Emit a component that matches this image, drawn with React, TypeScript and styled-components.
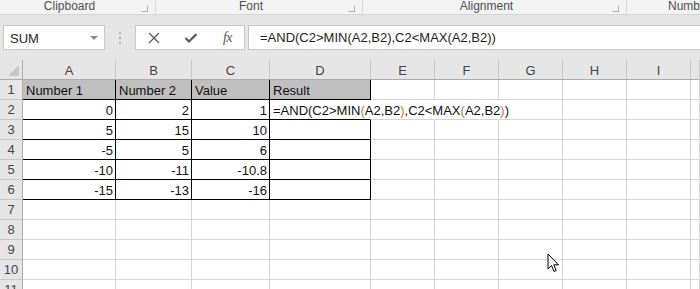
import React from "react";
import styled, { createGlobalStyle } from "styled-components";

const Global = createGlobalStyle`
  html, body { margin: 0; padding: 0; background: #ffffff; overflow: hidden; }
  body { font-family: "Liberation Sans", Arial, sans-serif; }
`;

const Page = styled.div`
  position: relative;
  width: 700px;
  height: 289px;
  overflow: hidden;
  background: #ffffff;
`;

const RibbonStrip = styled.div`
  display: flex;
  height: 14px;
  background: #f3f3f3;
  border-bottom: 1px solid #d5d5d5;
`;

const Group = styled.div<{ $w?: number }>`
  display: flex;
  align-items: center;
  ${(p) => (p.$w ? `width: ${p.$w}px;` : "flex: 1; min-width: 0;")}
  border-right: 1px solid #d8d8d8;
  box-sizing: border-box;
  height: 14px;
  overflow: hidden;
  &:last-child { border-right: none; }
`;

const GroupLabel = styled.div<{ $pad?: number; $start?: boolean }>`
  flex: 1;
  text-align: ${(p) => (p.$start ? "left" : "center")};
  font-size: 12px;
  color: #505050;
  line-height: 12px;
  margin-top: -2px;
  padding-left: ${(p) => p.$pad ?? 0}px;
  white-space: nowrap;
`;

const Launcher = styled.div`
  width: 7px;
  height: 7px;
  margin: 0 7px 0 4px;
  border: 1px solid #b0b0b0;
  box-sizing: border-box;
  border-top-color: transparent;
  border-left-color: transparent;
  position: relative;
  top: 1px;
`;

const FormulaArea = styled.div`
  background: #e6e6e6;
  padding: 10px 0 10px 3px;
  display: flex;
  align-items: center;
  height: 25px;
`;

const NameBox = styled.div`
  width: 102px;
  height: 25px;
  box-sizing: border-box;
  background: #ffffff;
  border: 1px solid #c6c6c6;
  display: flex;
  align-items: center;
  padding: 0 6px;
  font-size: 13px;
  color: #262626;
`;

const NameText = styled.span`
  flex: 1;
  padding-top: 1px;
`;

const Caret = styled.div`
  width: 0;
  height: 0;
  border-left: 4px solid transparent;
  border-right: 4px solid transparent;
  border-top: 4px solid #8a8a8a;
`;

const Grip = styled.div`
  width: 30px;
  display: flex;
  flex-direction: column;
  align-items: center;
  gap: 3px;
`;

const GripDot = styled.div`
  width: 2px;
  height: 2px;
  background: #b0b0b0;
`;

const Controls = styled.div`
  width: 110px;
  height: 25px;
  box-sizing: border-box;
  background: #ffffff;
  border: 1px solid #c6c6c6;
  display: flex;
  align-items: center;
  justify-content: space-between;
  padding: 0 12px 0 12px;
`;

const Fx = styled.span`
  font-family: "Liberation Serif", "Times New Roman", serif;
  font-style: italic;
  font-size: 14px;
  color: #555;
  letter-spacing: -0.5px;
`;

const FormulaInput = styled.div`
  flex: 1;
  margin-left: 3px;
  height: 25px;
  box-sizing: border-box;
  background: #ffffff;
  border: 1px solid #c6c6c6;
  border-right: none;
  display: flex;
  align-items: center;
  padding-left: 11px;
  font-size: 13px;
  color: #1e1e1e;
  white-space: nowrap;
`;

const Sheet = styled.div`
  display: grid;
  grid-template-columns: 23px 93px 76px 78px 101px 64px 64px 64px 64px 64px 1fr;
  grid-auto-rows: 20px;
`;

type Line = "grid" | "black" | "none" | "head";
const lineColor = (l: Line) =>
  l === "black" ? "#000000" : l === "none" ? "transparent" : l === "head" ? "#ababab" : "#d4d4d4";

const HeadCell = styled.div<{ $bottom?: Line }>`
  background: #e6e6e6;
  border-right: 1px solid #c8c8c8;
  border-bottom: 1px solid ${(p) => lineColor(p.$bottom ?? "head")};
  box-sizing: border-box;
  display: flex;
  align-items: center;
  justify-content: center;
  font-size: 13px;
  color: #444444;
  padding-top: 1px;
`;

const RowHead = styled.div<{ $right?: Line }>`
  background: #e6e6e6;
  border-right: 1px solid ${(p) => lineColor(p.$right ?? "head")};
  border-bottom: 1px solid #c8c8c8;
  box-sizing: border-box;
  display: flex;
  align-items: center;
  justify-content: center;
  font-size: 13px;
  color: #444444;
`;

const Corner = styled.div`
  position: relative;
  background: #e6e6e6;
  border-right: 1px solid #ababab;
  border-bottom: 1px solid #ababab;
  box-sizing: border-box;
  &::after {
    content: "";
    position: absolute;
    right: 3px;
    bottom: 3px;
    width: 0;
    height: 0;
    border-left: 11px solid transparent;
    border-bottom: 11px solid #c6c6c6;
  }
`;

const Cell = styled.div<{
  $fill?: string;
  $align?: "left" | "right";
  $right?: Line;
  $bottom?: Line;
  $over?: boolean;
}>`
  position: relative;
  background: ${(p) => p.$fill ?? "#ffffff"};
  border-right: 1px solid ${(p) => lineColor(p.$right ?? "grid")};
  border-bottom: 1px solid ${(p) => lineColor(p.$bottom ?? "grid")};
  box-sizing: border-box;
  display: flex;
  align-items: center;
  justify-content: ${(p) => (p.$align === "right" ? "flex-end" : "flex-start")};
  padding: 1px 2px 0 3px;
  font-size: 13px;
  color: #111111;
  white-space: nowrap;
  overflow: ${(p) => (p.$over ? "visible" : "hidden")};
  z-index: ${(p) => (p.$over ? 2 : 1)};
`;

const Paren = styled.span<{ $c: string }>`
  color: ${(p) => p.$c};
`;

const Cursor = styled.svg`
  position: absolute;
  left: 547px;
  top: 253px;
  z-index: 5;
`;

const cols = ["A", "B", "C", "D", "E", "F", "G", "H", "I", ""];

const data: (number | string)[][] = [
  [0, 2, 1],
  [5, 15, 10],
  [-5, 5, 6],
  [-10, -11, -10.8],
  [-15, -13, -16],
];

const orange = "#c5783a";

const FormulaInCell = () => (
  <>
    =AND(C2&gt;MIN<Paren $c={orange}>(</Paren>A2,B2<Paren $c={orange}>)</Paren>,C2&lt;MAX
    <Paren $c={orange}>(</Paren>A2,B2<Paren $c={orange}>)</Paren>)
  </>
);

export default function App() {
  const rows: React.ReactNode[] = [];

  rows.push(<Corner key="corner" />);
  cols.forEach((c, i) => rows.push(<HeadCell key={"h" + i}>{c}</HeadCell>));

  for (let r = 1; r <= 11; r++) {
    const inTable = r >= 1 && r <= 6;
    rows.push(<RowHead key={"r" + r}>{r}</RowHead>);
    for (let c = 0; c < cols.length; c++) {
      const key = `c${r}-${c}`;
      const tableCol = c <= 3;
      if (r === 1 && tableCol) {
        const labels = ["Number 1", "Number 2", "Value", "Result"];
        rows.push(
          <Cell key={key} $fill="#bfbfbf" $right="black" $bottom="black">
            {labels[c]}
          </Cell>
        );
        continue;
      }
      if (inTable && tableCol) {
        const isD = c === 3;
        if (r === 2 && isD) {
          rows.push(
            <Cell key={key} $right="none" $bottom="black" $over>
              <FormulaInCell />
            </Cell>
          );
          continue;
        }
        rows.push(
          <Cell key={key} $align="right" $right="black" $bottom="black">
            {isD ? "" : data[r - 2][c]}
          </Cell>
        );
        continue;
      }
      const hideRight = r === 2 && (c === 4 || c === 5);
      rows.push(<Cell key={key} $right={hideRight ? "none" : "grid"} />);
    }
  }

  return (
    <Page>
      <Global />
      <RibbonStrip>
        <Group $w={156}>
          <GroupLabel $pad={2}>Clipboard</GroupLabel>
          <Launcher />
        </Group>
        <Group $w={207}>
          <GroupLabel $pad={2}>Font</GroupLabel>
          <Launcher />
        </Group>
        <Group $w={264}>
          <GroupLabel $pad={2}>Alignment</GroupLabel>
          <Launcher />
        </Group>
        <Group>
          <GroupLabel $start $pad={41}>Number</GroupLabel>
        </Group>
      </RibbonStrip>

      <FormulaArea>
        <NameBox>
          <NameText>SUM</NameText>
          <Caret />
        </NameBox>
        <Grip>
          <GripDot />
          <GripDot />
          <GripDot />
        </Grip>
        <Controls>
          <svg width="12" height="12" viewBox="0 0 12 12">
            <path d="M1 1 L11 11 M11 1 L1 11" stroke="#5a5a5a" strokeWidth="1.3" fill="none" />
          </svg>
          <svg width="14" height="12" viewBox="0 0 14 12">
            <path d="M1.5 6 L5 9.5 L12.5 2" stroke="#5a5a5a" strokeWidth="2.2" fill="none" />
          </svg>
          <Fx>fx</Fx>
        </Controls>
        <FormulaInput>=AND(C2&gt;MIN(A2,B2),C2&lt;MAX(A2,B2))</FormulaInput>
      </FormulaArea>

      <Sheet>{rows}</Sheet>

      <Cursor width="14" height="21" viewBox="0 0 14 21">
        <path
          d="M1 1 L1 16 L4.5 12.5 L7 18.5 L9.2 17.6 L6.8 11.8 L11.5 11.8 Z"
          fill="#ffffff"
          stroke="#000000"
          strokeWidth="1"
          strokeLinejoin="miter"
        />
      </Cursor>
    </Page>
  );
}
